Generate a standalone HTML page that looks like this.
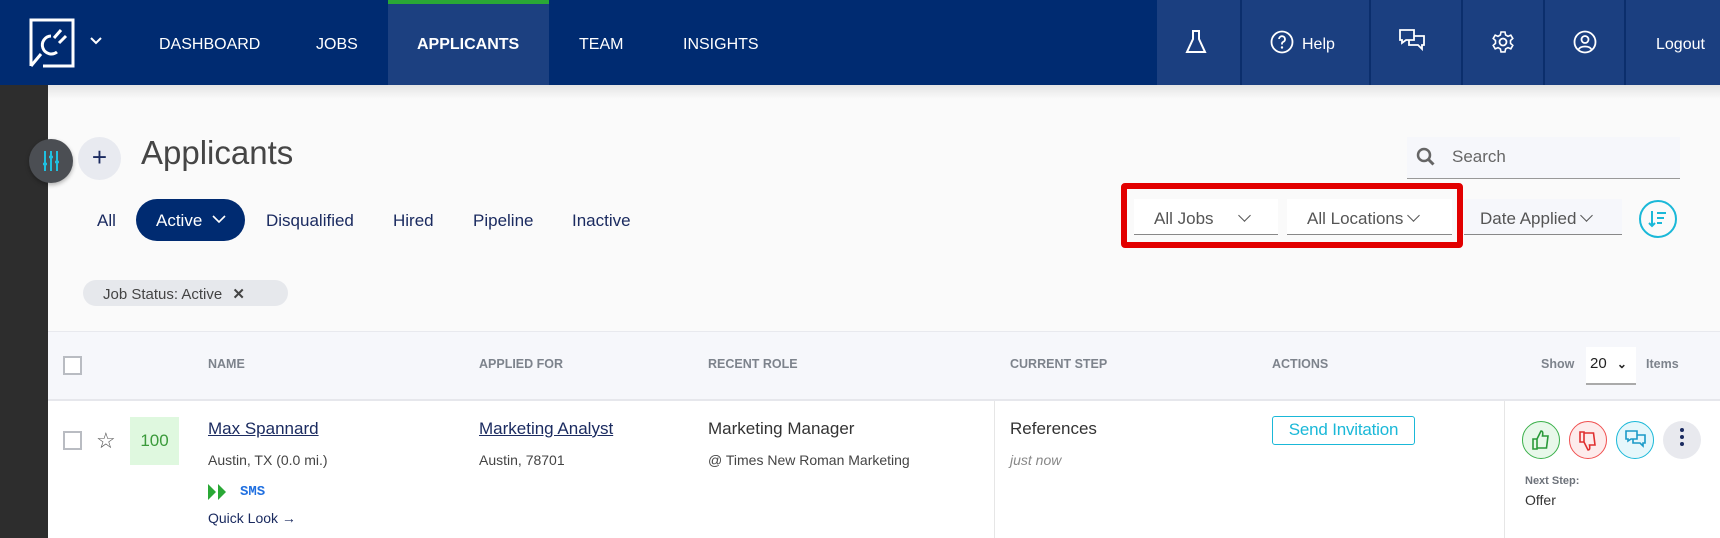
<!DOCTYPE html>
<html><head><meta charset="utf-8"><style>
*{box-sizing:border-box;margin:0;padding:0}
body{width:1720px;height:538px;overflow:hidden;background:#fafafa;font-family:"Liberation Sans",sans-serif;position:relative}
.a{position:absolute;white-space:nowrap}
.nav{left:0;top:0;width:1720px;height:85px;background:#002b71}
.nt{color:#fff;font-size:16px;top:36px}
.rb{top:0;height:85px;background:#1b3f80}
.sep{top:0;width:2px;height:85px;background:#0b2e6c}
.tab{font-size:17px;color:#1b2b60;top:211px}
.th{font-size:12.5px;font-weight:bold;color:#7d838c;top:357px}
.dd{background:#fff;border-bottom:1px solid #888;height:36px;top:199px;font-size:17px;color:#555;padding:10px 0 0 20px}
.chev{display:inline-block;width:9px;height:9px;border-right:1.6px solid #555;border-bottom:1.6px solid #555;transform:rotate(45deg)}
.cb{width:19px;height:19px;border:2px solid #b9bcc2;background:#fff}
.circ{width:38px;height:38px;border-radius:50%;top:421px}
</style></head><body>
<div class="a nav"></div>
<svg class="a" style="left:29px;top:18px" width="46" height="50" viewBox="0 0 46 50"><path d="M2 48V2H44V48H14" fill="none" stroke="#fff" stroke-width="3"/><path d="M2 48l10-12" fill="none" stroke="#fff" stroke-width="3"/><path d="M22 18a9 9 0 1 0 6 16" fill="none" stroke="#fff" stroke-width="3"/><path d="M25 20l7-8M30 25l7-7" fill="none" stroke="#fff" stroke-width="3"/></svg>
<svg class="a" style="left:90px;top:37px" width="12" height="8"><path d="M1 1l5 5 5-5" fill="none" stroke="#fff" stroke-width="2"/></svg>
<div class="a nt" style="left:159px">DASHBOARD</div>
<div class="a nt" style="left:316px">JOBS</div>
<div class="a" style="left:388px;top:0;width:161px;height:85px;background:#1c4080;border-top:4px solid #2aa836"></div>
<div class="a nt" style="left:417px;font-weight:bold">APPLICANTS</div>
<div class="a nt" style="left:579px">TEAM</div>
<div class="a nt" style="left:683px">INSIGHTS</div>
<div class="a rb" style="left:1157px;width:563px"></div>
<div class="a sep" style="left:1240px"></div><div class="a sep" style="left:1369px"></div><div class="a sep" style="left:1461px"></div><div class="a sep" style="left:1543px"></div><div class="a sep" style="left:1624px"></div>
<svg class="a" style="left:1184px;top:29px" width="24" height="26" viewBox="0 0 24 26"><path d="M8 2h8M9 2v8L3 23h18L15 10V2" fill="none" stroke="#fff" stroke-width="2"/></svg>
<svg class="a" style="left:1270px;top:30px" width="24" height="24" viewBox="0 0 24 24"><circle cx="12" cy="12" r="10.5" fill="none" stroke="#fff" stroke-width="1.8"/><path d="M9 9a3 3 0 1 1 4 3c-1 .5-1 1-1 2.5" fill="none" stroke="#fff" stroke-width="1.8"/><circle cx="12" cy="17.5" r="1.2" fill="#fff"/></svg>
<div class="a nt" style="left:1302px">Help</div>
<svg class="a" style="left:1398px;top:28px" width="28" height="26" viewBox="0 0 28 26"><path d="M2 2h14v10H8l-4 3v-3H2z M11 12v5h9l4 4v-4h2V8h-10" fill="none" stroke="#fff" stroke-width="1.8"/></svg>
<svg class="a" style="left:1491px;top:30px" width="24" height="24" viewBox="0 0 24 24"><circle cx="12" cy="12" r="3.5" fill="none" stroke="#fff" stroke-width="1.8"/><path d="M10 2h4l.6 3 2.4 1.3 2.8-1.2 2 3.4-2.3 2v2.9l2.3 2-2 3.4-2.8-1.2-2.4 1.3-.6 3h-4l-.6-3-2.4-1.3-2.8 1.2-2-3.4 2.3-2v-2.9l-2.3-2 2-3.4 2.8 1.2L9.4 5z" fill="none" stroke="#fff" stroke-width="1.6"/></svg>
<svg class="a" style="left:1573px;top:30px" width="24" height="24" viewBox="0 0 24 24"><circle cx="12" cy="12" r="10.5" fill="none" stroke="#fff" stroke-width="1.8"/><circle cx="12" cy="9.5" r="3.5" fill="none" stroke="#fff" stroke-width="1.8"/><path d="M5.5 19.5c2-4 11-4 13 0" fill="none" stroke="#fff" stroke-width="1.8"/></svg>
<div class="a nt" style="left:1656px">Logout</div>
<div class="a" style="left:0;top:85px;width:48px;height:453px;background:#2d2d2d"></div>
<div class="a" style="left:48px;top:85px;width:1672px;height:14px;background:linear-gradient(#e4e4e4,#fafafa)"></div>
<div class="a" style="left:29px;top:139px;width:44px;height:44px;border-radius:50%;background:#4b4e53;box-shadow:0 2px 4px rgba(0,0,0,.3)"></div>
<svg class="a" style="left:42px;top:150px" width="18" height="22" viewBox="0 0 18 22"><path d="M3 1v20M9 1v20M15 1v20" stroke="#1fc0e0" stroke-width="2"/><path d="M1 14h4M7 7h4M13 12h4" stroke="#1fc0e0" stroke-width="2.5"/></svg>
<div class="a" style="left:78px;top:137px;width:43px;height:43px;border-radius:50%;background:#e8eaf0;color:#1b2b60;font-size:26px;text-align:center;line-height:41px">+</div>
<div class="a" style="left:141px;top:134px;font-size:33px;color:#454545;font-weight:300">Applicants</div>
<div class="a tab" style="left:97px">All</div>
<div class="a" style="left:136px;top:199px;width:109px;height:42px;border-radius:21px;background:#002b71"></div>
<div class="a tab" style="left:156px;color:#fff">Active</div>
<svg class="a" style="left:212px;top:215px" width="14" height="9"><path d="M1 1l6 6 6-6" fill="none" stroke="#fff" stroke-width="1.6"/></svg>
<div class="a tab" style="left:266px">Disqualified</div>
<div class="a tab" style="left:393px">Hired</div>
<div class="a tab" style="left:473px">Pipeline</div>
<div class="a tab" style="left:572px">Inactive</div>
<div class="a" style="left:83px;top:280px;width:205px;height:26px;border-radius:13px;background:#e6e8ec;font-size:15px;color:#444;padding:5px 0 0 20px">Job Status: Active <b style="margin-left:6px">✕</b></div>
<div class="a" style="left:1407px;top:137px;width:273px;height:42px;background:#f6f7fb;border-bottom:1px solid #999"></div>
<svg class="a" style="left:1416px;top:147px" width="20" height="20" viewBox="0 0 20 20"><circle cx="8" cy="8" r="6" fill="none" stroke="#666" stroke-width="2.5"/><path d="M12.5 12.5l5 5" stroke="#666" stroke-width="3"/></svg>
<div class="a" style="left:1452px;top:147px;font-size:17px;color:#666">Search</div>
<div class="a" style="left:1121px;top:183px;width:342px;height:65px;border:6px solid #e20000;border-radius:4px"></div>
<div class="a dd" style="left:1134px;width:144px">All Jobs <span class="chev" style="margin:0 0 4px 22px"></span></div>
<div class="a dd" style="left:1287px;width:165px">All Locations<span class="chev" style="margin:0 0 4px 6px"></span></div>
<div class="a dd" style="left:1464px;width:158px;background:#f6f7fb;padding-left:16px">Date Applied<span class="chev" style="margin:0 0 4px 6px"></span></div>
<div class="a" style="left:1639px;top:200px;width:38px;height:38px;border-radius:50%;border:2px solid #1ab8d8"></div>
<svg class="a" style="left:1647px;top:208px" width="22" height="22" viewBox="0 0 22 22"><path d="M5 3v15M2 15l3 3 3-3M10 5h9M10 10h7M10 15h5" fill="none" stroke="#1ab8d8" stroke-width="2"/></svg>
<div class="a" style="left:48px;top:331px;width:1672px;height:70px;background:#f6f7fb;border-top:1px solid #e8e9ee;border-bottom:2px solid #e6e7ec"></div>
<div class="a cb" style="left:63px;top:356px"></div>
<div class="a th" style="left:208px">NAME</div>
<div class="a th" style="left:479px">APPLIED FOR</div>
<div class="a th" style="left:708px">RECENT ROLE</div>
<div class="a th" style="left:1010px">CURRENT STEP</div>
<div class="a th" style="left:1272px">ACTIONS</div>
<div class="a th" style="left:1541px">Show</div>
<div class="a" style="left:1586px;top:347px;width:50px;height:38px;background:#fff;border-bottom:2px solid #aaa;font-size:15px;color:#222;padding:8px 0 0 4px">20 <b style="font-size:12px;margin-left:6px">⌄</b></div>
<div class="a th" style="left:1646px">Items</div>
<div class="a" style="left:48px;top:401px;width:1672px;height:137px;background:#fff"></div>
<div class="a" style="left:994px;top:401px;width:1px;height:137px;background:#e6e6e6"></div>
<div class="a" style="left:1504px;top:401px;width:1px;height:137px;background:#e6e6e6"></div>
<div class="a cb" style="left:63px;top:431px"></div>
<div class="a" style="left:96px;top:428px;font-size:22px;color:#555">☆</div>
<div class="a" style="left:130px;top:417px;width:49px;height:48px;background:#dff8df;color:#3a9a3a;font-size:17px;text-align:center;line-height:48px">100</div>
<div class="a" style="left:208px;top:419px;font-size:17px;color:#1b2b60;text-decoration:underline">Max Spannard</div>
<div class="a" style="left:208px;top:452px;font-size:14px;color:#444">Austin, TX (0.0 mi.)</div>
<svg class="a" style="left:208px;top:484px" width="22" height="16"><path d="M0 0l8 8-8 8zM10 0l8 8-8 8z" fill="#2aa836"/></svg>
<div class="a" style="left:240px;top:484px;font-size:14px;font-weight:bold;color:#1f6fe0;font-family:'Liberation Mono',monospace">SMS</div>
<div class="a" style="left:208px;top:510px;font-size:14px;color:#1b2b60">Quick Look →</div>
<div class="a" style="left:479px;top:419px;font-size:17px;color:#1b2b60;text-decoration:underline">Marketing Analyst</div>
<div class="a" style="left:479px;top:452px;font-size:14px;color:#444">Austin, 78701</div>
<div class="a" style="left:708px;top:419px;font-size:17px;color:#333">Marketing Manager</div>
<div class="a" style="left:708px;top:452px;font-size:14px;color:#444">@ Times New Roman Marketing</div>
<div class="a" style="left:1010px;top:419px;font-size:17px;color:#333">References</div>
<div class="a" style="left:1010px;top:452px;font-size:14px;color:#888;font-style:italic">just now</div>
<div class="a" style="left:1272px;top:416px;width:143px;height:29px;border:1.5px solid #1ab8d8;border-radius:3px;color:#1ab8d8;font-size:17px;text-align:center;line-height:26px;letter-spacing:-.2px">Send Invitation</div>
<div class="a circ" style="left:1522px;border:1.5px solid #3ab04a;background:#e8f8ea"></div>
<svg class="a" style="left:1532px;top:430px" width="18" height="20" viewBox="0 0 18 20"><path d="M1 9h4v10H1zM5 9l4-8c2 0 2 2 1.5 5H16l-1.5 12H5" fill="none" stroke="#2a9a3a" stroke-width="1.6"/></svg>
<div class="a circ" style="left:1569px;border:1.5px solid #f05050;background:#fdecec"></div>
<svg class="a" style="left:1579px;top:431px" width="18" height="20" viewBox="0 0 18 20"><path d="M1 11h4V1H1zM5 11l4 8c2 0 2-2 1.5-5H16L14.5 2H5" fill="none" stroke="#e03030" stroke-width="1.6"/></svg>
<div class="a circ" style="left:1616px;border:1.5px solid #1ab8d8;background:#e6f7fb"></div>
<svg class="a" style="left:1625px;top:430px" width="22" height="20" viewBox="0 0 22 20"><path d="M1 1h11v8H6l-3 2V9H1zM8 9v4h7l3 3v-3h2V5h-8" fill="none" stroke="#1a9ac8" stroke-width="1.6"/></svg>
<div class="a circ" style="left:1663px;background:#e8e9ee"></div>
<div class="a" style="left:1680px;top:428px;width:4px;height:4px;border-radius:2px;background:#1b2b60;box-shadow:0 7px 0 #1b2b60,0 14px 0 #1b2b60"></div>
<div class="a" style="left:1525px;top:475px;font-size:11px;font-weight:bold;color:#6d727a">Next Step:</div>
<div class="a" style="left:1525px;top:492px;font-size:14px;color:#333">Offer</div>
</body></html>
